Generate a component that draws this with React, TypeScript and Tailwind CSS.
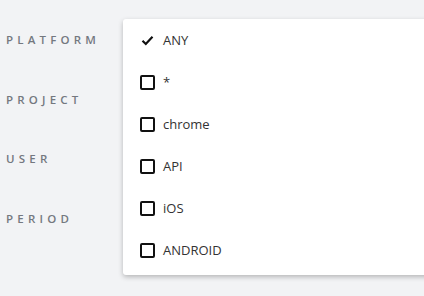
import React from "react";

const items = ["ANY", "*", "chrome", "API", "iOS", "ANDROID"];
const labels = ["PLATFORM", "PROJECT", "USER", "PERIOD"];

export default function App() {
  return (
    <div className="relative w-[424px] h-[296px] overflow-hidden bg-[#f2f3f5]" style={{ fontFamily: '"Open Sans", "Noto Sans", sans-serif' }}>
      <div className="flex flex-col pt-[31px] pl-[6px] gap-[41.5px]">
        {labels.map((l) => (
          <div key={l} className="h-[18px] leading-[18px] text-[11.5px] font-semibold tracking-[4.2px] text-[#74787f]">
            {l}
          </div>
        ))}
      </div>
      <div className="absolute left-[123px] top-[19px] w-[320px] h-[256px] overflow-hidden bg-white rounded-[3px] shadow-[0_2px_5px_rgba(0,0,0,0.25)] pt-[11px] flex flex-col">
        {items.map((it, i) => (
          <div key={it} className="h-[42px] shrink-0 flex items-start pl-[16px] pt-[1px]">
            <div className="w-[16px] h-[18px] flex items-center justify-center">
              {i === 0 ? (
                <svg width="13" height="11" viewBox="0 0 13 11">
                  <path d="M1.5 5.8 L4.8 9 L11.5 1.8" fill="none" stroke="#111" strokeWidth="2.2" />
                </svg>
              ) : (
                <div className="w-[15px] h-[15px] border-2 border-[#111] rounded-[2px]" />
              )}
            </div>
            <span className="ml-[8px] text-[13px] leading-[18px] text-[#333]">{it}</span>
          </div>
        ))}
      </div>
    </div>
  );
}
